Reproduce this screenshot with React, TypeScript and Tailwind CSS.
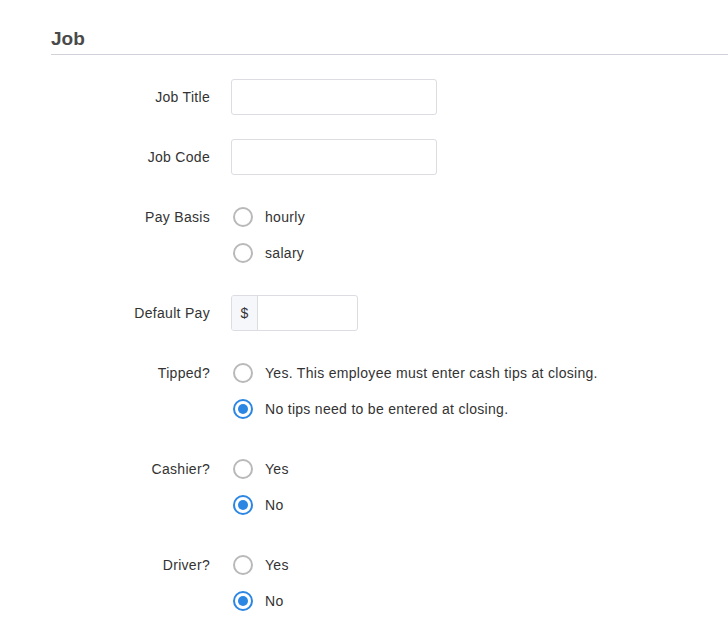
import React from "react";

type Option = { label: string; checked?: boolean };

function Radio({ label, checked }: Option) {
  return (
    <label className="ml-0.5 flex h-9 items-center gap-3">
      {checked ? (
        <span className="flex h-5 w-5 items-center justify-center rounded-full border-2 border-[#2b87e3]">
          <span className="h-2.5 w-2.5 rounded-full bg-[#2b87e3]" />
        </span>
      ) : (
        <span className="h-5 w-5 rounded-full border-2 border-[#b9b9b9]" />
      )}
      <span>{label}</span>
    </label>
  );
}

function Row({ label, children }: { label: string; children: React.ReactNode }) {
  return (
    <div className="flex">
      <div className="flex h-9 w-[159px] shrink-0 items-center justify-end">{label}</div>
      <div className="ml-[21px] flex flex-col">{children}</div>
    </div>
  );
}

const TextInput = () => (
  <input
    type="text"
    className="h-9 w-[206px] rounded-[3px] border border-[#dcdce2] bg-white px-2 outline-none"
  />
);

export default function App() {
  return (
    <div
      className="min-h-screen bg-white pl-[51px] pt-[26px] text-[14px] tracking-[0.3px] text-[#333333]"
      style={{ fontFamily: '"Liberation Sans", Arial, sans-serif' }}
    >
      <h2 className="border-b border-[#d2d0d8] pb-[3px] text-[19px] font-bold leading-[25px] tracking-normal text-[#4a4a4a]">
        Job
      </h2>
      <div className="mt-6 flex flex-col gap-6">
        <Row label="Job Title">
          <TextInput />
        </Row>
        <Row label="Job Code">
          <TextInput />
        </Row>
        <Row label="Pay Basis">
          <Radio label="hourly" />
          <Radio label="salary" />
        </Row>
        <Row label="Default Pay">
          <div className="flex h-9 w-[127px] overflow-hidden rounded-[3px] border border-[#dcdce2]">
            <span className="flex w-[26px] items-center justify-center border-r border-[#dcdce2] bg-[#f6f7fb]">
              $
            </span>
            <input type="text" className="min-w-0 flex-1 px-2 outline-none" />
          </div>
        </Row>
        <Row label="Tipped?">
          <Radio label="Yes. This employee must enter cash tips at closing." />
          <Radio label="No tips need to be entered at closing." checked />
        </Row>
        <Row label="Cashier?">
          <Radio label="Yes" />
          <Radio label="No" checked />
        </Row>
        <Row label="Driver?">
          <Radio label="Yes" />
          <Radio label="No" checked />
        </Row>
      </div>
    </div>
  );
}
